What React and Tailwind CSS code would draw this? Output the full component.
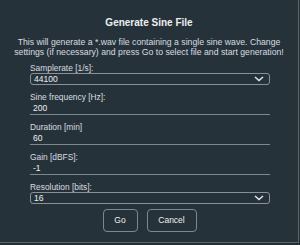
import React from 'react';

const Chevron = () => (
  <svg width="10" height="6" viewBox="0 0 10 6" className="mr-[5px]">
    <path d="M1 1 L5 4.5 L9 1" fill="none" stroke="#e6e9eb" strokeWidth="1.4" />
  </svg>
);

const SelectField = ({ label, value }) => (
  <div className="flex flex-col">
    <span className="h-[10px] text-[8.4px] leading-[10px] text-[#d9dde0]">{label}</span>
    <div className="flex h-[12px] items-center justify-between rounded-[3px] border border-[#8a9298]">
      <span className="pl-[3px] text-[8.5px] leading-none text-[#eef0f1]">{value}</span>
      <Chevron />
    </div>
  </div>
);

const TextField = ({ label, value }) => (
  <div className="flex flex-col">
    <span className="h-[10px] text-[8.4px] leading-[10px] text-[#d9dde0]">{label}</span>
    <div className="flex h-[13px] items-center border-b border-[#7f878d] pl-[3px]">
      <span className="text-[8.5px] leading-none text-[#eef0f1]">{value}</span>
    </div>
  </div>
);

export default function App() {
  return (
    <div className="h-[245px] w-[300px] bg-[#222d34]" style={{ fontFamily: '"Liberation Sans", Arial, sans-serif' }}>
      <div className="flex h-[243px] w-[299px] flex-col border-r border-b border-[#59636a] bg-[#26323a]">
        <div className="mt-[17px] h-[12px] text-center text-[10px] font-bold leading-[12px] text-[#eef0f1]">
          Generate Sine File
        </div>
        <div className="mt-[9px] px-[8px] text-center text-[8.7px] leading-[9.5px] text-[#d9dde0]">
          This will generate a *.wav file containing a single sine wave. Change settings (if necessary) and press Go to select file and start generation!
        </div>
        <div className="mx-[30px] mt-[6px] flex w-[240px] flex-col gap-[7px]">
          <SelectField label="Samplerate [1/s]:" value="44100" />
          <TextField label="Sine frequency [Hz]:" value="200" />
          <TextField label="Duration [min]" value="60" />
          <TextField label="Gain [dBFS]:" value="-1" />
          <SelectField label="Resolution [bits]:" value="16" />
        </div>
        <div className="mt-[5px] flex justify-center gap-[9px] pl-[1px]">
          <button className="h-[23px] w-[35px] rounded-[4px] border border-[#7f878d] text-[8.5px] text-[#eef0f1]">Go</button>
          <button className="h-[23px] w-[50px] rounded-[4px] border border-[#7f878d] text-[8.5px] text-[#eef0f1]">Cancel</button>
        </div>
      </div>
    </div>
  );
}
